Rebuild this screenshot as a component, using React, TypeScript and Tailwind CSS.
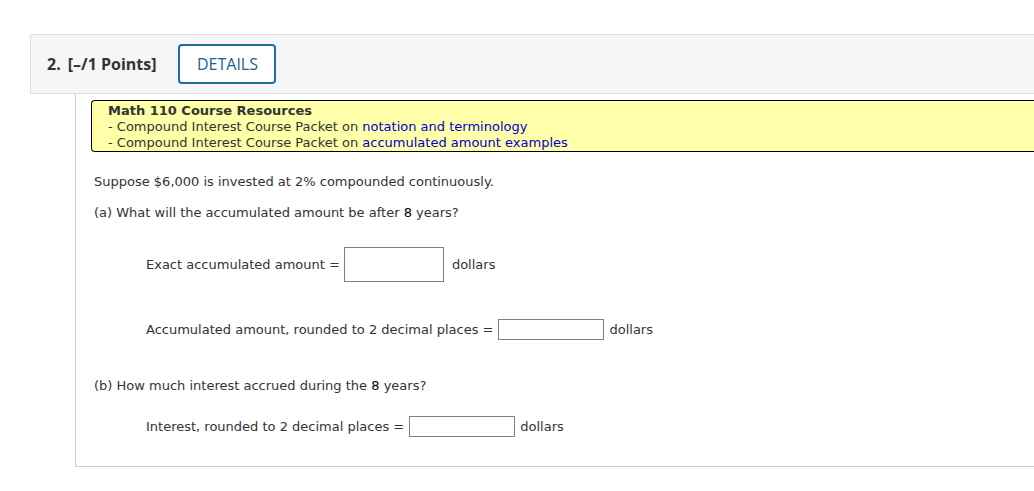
export default function App() {
  const body = { fontFamily: '"DejaVu Sans", Verdana, sans-serif' }
  return (
    <div className="min-h-[491px] w-[1034px] overflow-hidden bg-white text-[13px] text-[#333]" style={body}>
      <div className="pt-[34px] pl-[30px]">
        {/* Question header */}
        <div className="flex h-[60px] w-[1010px] items-center rounded-tl-[2px] border border-r-0 border-[#dedede] bg-[#f6f6f6] pl-[16px]"
          style={{ fontFamily: '"Open Sans", sans-serif' }}>
          <span className="text-[16px] font-bold text-[#333]">2.</span>
          <span className="ml-[7px] text-[16px] font-bold text-[#333]">[–/1 Points]</span>
          <button type="button"
            className="ml-[22px] flex h-[40px] w-[98px] items-center justify-center rounded-[4px] border-2 border-[#1c6ea4] bg-white text-[16px] text-[#1d5f92]">
            DETAILS
          </button>
        </div>

        {/* Question body */}
        <div className="ml-[45px] h-[373px] border-b border-l border-[#cccccc] pl-[15px] pt-[6px]">
          <div className="w-[1000px] rounded-l-[4px] border border-r-0 border-black bg-[#ffffaa] pl-[16px] pt-[2px] leading-[16px]">
            <div className="font-bold">Math 110 Course Resources</div>
            <div>- Compound Interest Course Packet on <span className="text-[#0000cc]">notation and terminology</span></div>
            <div>- Compound Interest Course Packet on <span className="text-[#0000cc]">accumulated amount examples</span></div>
          </div>

          <div className="ml-[3px]">
            <p className="mt-[22px] leading-[16px]">Suppose $6,000 is invested at 2% compounded continuously.</p>
            <p className="mt-[15px] leading-[16px]">(a) What will the accumulated amount be after <span className="text-black">8</span> years?</p>

            <div className="mt-[26px] ml-[52px] flex items-center">
              <span>Exact accumulated amount =</span>
              <div className="ml-[4px] h-[35px] w-[100px] border border-[#808080] bg-white" />
              <span className="ml-[8px]">dollars</span>
            </div>

            <div className="mt-[37px] ml-[52px] flex items-center">
              <span>Accumulated amount, rounded to 2 decimal places =</span>
              <div className="ml-[5px] h-[21px] w-[106px] border border-[#808080] bg-white" />
              <span className="ml-[5px]">dollars</span>
            </div>

            <p className="mt-[38px] leading-[16px]">(b) How much interest accrued during the <span className="text-black">8</span> years?</p>

            <div className="mt-[22px] ml-[52px] flex items-center">
              <span>Interest, rounded to 2 decimal places =</span>
              <div className="ml-[5px] h-[21px] w-[106px] border border-[#808080] bg-white" />
              <span className="ml-[5px]">dollars</span>
            </div>
          </div>
        </div>
      </div>
    </div>
  )
}
